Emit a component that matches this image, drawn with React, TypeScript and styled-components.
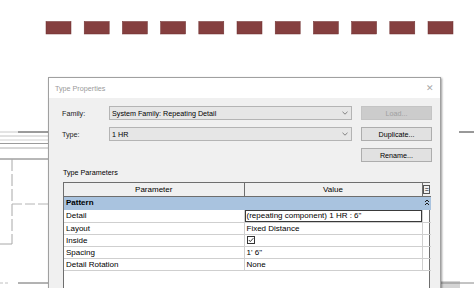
import React from "react";
import styled, { createGlobalStyle } from "styled-components";

const GlobalStyle = createGlobalStyle`
  * { box-sizing: border-box; }
  html, body { margin: 0; padding: 0; background: #fff; }
  body { font-family: "Liberation Sans", Arial, sans-serif; }
`;

const Stage = styled.div`
  position: relative;
  width: 474px;
  height: 288px;
  overflow: hidden;
  background: #fff;
`;

const Drawing = styled.svg`
  display: block;
`;

// floating window over the drafting canvas
const Dialog = styled.div`
  position: absolute;
  left: 48px;
  top: 77px;
  width: 393px;
  height: 240px;
  border: 1px solid #a0a0a0;
  background: #f0f0f0;
  box-shadow: 1px 1px 2px rgba(0, 0, 0, 0.4);
  display: flex;
  flex-direction: column;
  font-size: 7.2px;
  color: #000;
`;

const TitleBar = styled.div`
  height: 20px;
  background: #fff;
  display: flex;
  align-items: center;
  justify-content: space-between;
  padding: 0 6px 0 6px;
  color: #9a9a9a;
  font-size: 7.2px;
`;

const CloseGlyph = styled.span`
  color: #a8a8a8;
  font-size: 9px;
  line-height: 1;
`;

const Body = styled.div`
  flex: 1;
  display: flex;
  flex-direction: column;
  padding: 8px 9px 0 13px;
`;

const FormGrid = styled.div`
  display: grid;
  grid-template-columns: 38px 243px 71px;
  grid-auto-rows: 14px;
  column-gap: 9px;
  row-gap: 7px;
  align-items: center;
`;

const Label = styled.span`
  color: #1a1a1a;
`;

const Combo = styled.div`
  height: 14px;
  border: 1px solid #b4b4b4;
  background: #e6e6e6;
  display: flex;
  align-items: center;
  justify-content: space-between;
  padding: 0 3px 0 2px;
`;

const Button = styled.div<{ $disabled?: boolean }>`
  grid-column: 3;
  height: 14px;
  border: 1px solid ${(p) => (p.$disabled ? "#c4c4c4" : "#adadad")};
  background: ${(p) => (p.$disabled ? "#cccccc" : "#e1e1e1")};
  color: ${(p) => (p.$disabled ? "#a0a0a0" : "#000")};
  display: flex;
  align-items: center;
  justify-content: center;
`;

const SectionLabel = styled.div`
  margin: 3px 0 0 1px;
  height: 14px;
  display: flex;
  align-items: center;
`;

const TableBox = styled.div`
  margin: 3px 0 0 1px;
  width: 367px;
  flex: 1;
  background: #fff;
  border: 1px solid #6e6e6e;
`;

const Grid = styled.table`
  width: 100%;
  border-collapse: collapse;
  table-layout: fixed;
  font-size: 8px;

  th {
    height: 13px;
    background: #f0f0f0;
    font-weight: normal;
    border: 1px solid #6e6e6e;
    border-top: none;
    padding: 0;
  }

  th:first-child { border-left: none; }
  th:last-child { border-right: none; }

  td {
    height: 12px;
    padding: 0 0 0 2px;
    border: 1px solid #cfcfcf;
    white-space: nowrap;
    overflow: hidden;
  }

  td:first-child { border-left: none; }
  td:last-child { border-right: none; padding: 0; }
`;

const GroupRow = styled.tr`
  td {
    background: #a9c3df;
    font-weight: bold;
    height: 13px;
    border-color: #a9c3df;
  }
`;

const EqBox = styled.span`
  display: inline-block;
  width: 7px;
  height: 9px;
  border: 1px solid #555;
  line-height: 7px;
  text-align: center;
  font-size: 7px;
`;

const EditCell = styled.td`
  && {
    padding: 0;
  }
`;

const EditField = styled.div`
  height: 12px;
  border: 1px solid #3a3a3a;
  display: flex;
  align-items: center;
  padding-left: 1px;
`;

const Check = styled.svg`
  display: block;
`;

const ChevronDown = () => (
  <svg width="6" height="4" viewBox="0 0 6 4">
    <path d="M0.5 0.8 L3 3.2 L5.5 0.8" fill="none" stroke="#666" strokeWidth="0.8" />
  </svg>
);

const CollapseIcon = () => (
  <svg width="6" height="7" viewBox="0 0 6 7" style={{ display: "block", margin: "0 auto" }}>
    <path d="M1 3 L3 1 L5 3 M1 6 L3 4 L5 6" fill="none" stroke="#1a1a1a" strokeWidth="1" />
  </svg>
);

const rows = [
  { name: "Layout", value: "Fixed Distance" },
  { name: "Inside", value: "check" },
  { name: "Spacing", value: "1'  6\"" },
  { name: "Detail Rotation", value: "None" },
];

const Background = () => {
  const dashes = Array.from({ length: 11 }, (_, i) => 46 + i * 38.2);
  return (
    <Drawing width="474" height="288" viewBox="0 0 474 288">
      {dashes.map((x) => (
        <rect key={x} x={x} y={21.5} width={25} height={12.5} fill="#853f3f" stroke="#6e2f2f" strokeWidth="0.5" />
      ))}
      <g fill="none">
        <line x1="0" y1="132" x2="48" y2="132" stroke="#c8c8c8" />
        <line x1="18" y1="132" x2="48" y2="132" stroke="#555" />
        <line x1="0" y1="136" x2="48" y2="136" stroke="#c4c4c4" />
        <line x1="0" y1="140" x2="48" y2="140" stroke="#d0d0d0" />
        <line x1="0" y1="143.5" x2="48" y2="143.5" stroke="#9a9a9a" />
        <line x1="0" y1="148" x2="48" y2="148" stroke="#b0b0b0" />
        <line x1="0" y1="159" x2="48" y2="159" stroke="#707070" />
        <line x1="12" y1="159" x2="12" y2="244" stroke="#a8a8a8" strokeDasharray="12 3" />
        <line x1="12" y1="204" x2="48" y2="204" stroke="#b4b4b4" strokeDasharray="10 3" />
        <line x1="0" y1="244" x2="12" y2="244" stroke="#a8a8a8" />
        <line x1="0" y1="283" x2="8" y2="283" stroke="#c0c0c0" strokeDasharray="3 2" />
        <line x1="18" y1="283" x2="48" y2="283" stroke="#666" />
        <line x1="459" y1="132" x2="474" y2="132" stroke="#333" />
        <rect x="441" y="281" width="19" height="7" fill="#d4d4d4" />
        <line x1="441" y1="283" x2="474" y2="283" stroke="#888" />
      </g>
    </Drawing>
  );
};

export default function App() {
  return (
    <Stage>
      <GlobalStyle />
      <Background />
      <Dialog>
        <TitleBar>
          <span>Type Properties</span>
          <CloseGlyph>✕</CloseGlyph>
        </TitleBar>
        <Body>
          <FormGrid>
            <Label>Family:</Label>
            <Combo>
              <span>System Family: Repeating Detail</span>
              <ChevronDown />
            </Combo>
            <Button $disabled>Load...</Button>
            <Label>Type:</Label>
            <Combo>
              <span>1 HR</span>
              <ChevronDown />
            </Combo>
            <Button>Duplicate...</Button>
            <Button>Rename...</Button>
          </FormGrid>
          <SectionLabel>Type Parameters</SectionLabel>
          <TableBox>
            <Grid>
              <colgroup>
                <col style={{ width: 180 }} />
                <col style={{ width: 178 }} />
                <col style={{ width: 9 }} />
              </colgroup>
              <thead>
                <tr>
                  <th>Parameter</th>
                  <th>Value</th>
                  <th>
                    <EqBox>=</EqBox>
                  </th>
                </tr>
              </thead>
              <tbody>
                <GroupRow>
                  <td colSpan={2}>Pattern</td>
                  <td>
                    <CollapseIcon />
                  </td>
                </GroupRow>
                <tr>
                  <td>Detail</td>
                  <EditCell>
                    <EditField>(repeating component) 1 HR : 6"</EditField>
                  </EditCell>
                  <td />
                </tr>
                {rows.map((r) => (
                  <tr key={r.name}>
                    <td>{r.name}</td>
                    <td>
                      {r.value === "check" ? (
                        <Check width="8" height="8" viewBox="0 0 8 8">
                          <rect x="0.5" y="0.5" width="7" height="7" fill="#fff" stroke="#333" />
                          <path d="M1.8 4 L3.3 5.6 L6.3 2.2" fill="none" stroke="#222" strokeWidth="0.9" />
                        </Check>
                      ) : (
                        r.value
                      )}
                    </td>
                    <td />
                  </tr>
                ))}
              </tbody>
            </Grid>
          </TableBox>
        </Body>
      </Dialog>
    </Stage>
  );
}
